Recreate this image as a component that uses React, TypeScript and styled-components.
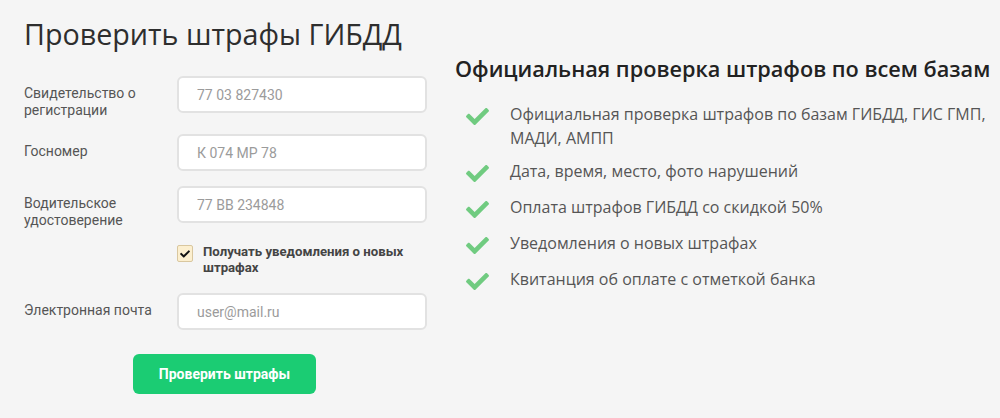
import React from "react";
import styled, { createGlobalStyle } from "styled-components";
import { FaCheck } from "react-icons/fa";

const GlobalStyle = createGlobalStyle`
  html, body {
    margin: 0;
    padding: 0;
    background: #f5f5f5;
  }
  * {
    box-sizing: border-box;
  }
`;

const Page = styled.div`
  display: flex;
  align-items: flex-start;
  width: 1000px;
  height: 418px;
  padding: 16px 0 0 24px;
  background: #f5f5f5;
  overflow: hidden;
`;

const FormColumn = styled.div`
  width: 403px;
  display: flex;
  flex-direction: column;
`;

const Title = styled.h1`
  margin: 0 0 24px;
  font-family: "Open Sans", "Liberation Sans", sans-serif;
  font-weight: 400;
  font-size: 28.7px;
  line-height: 36px;
  color: #2e2e2e;
`;

const FormRow = styled.div<{ $gap?: number }>`
  display: flex;
  align-items: flex-start;
  margin-top: ${(p) => p.$gap ?? 0}px;
`;

const Label = styled.label`
  width: 153px;
  flex-shrink: 0;
  padding: 9px 16px 0 0;
  font-family: Roboto, "Liberation Sans", sans-serif;
  font-size: 14px;
  line-height: 17px;
  color: #555;
`;

const TextInput = styled.input`
  width: 250px;
  height: 37px;
  padding: 0 18px;
  border: 2px solid #e2e2e2;
  border-radius: 6px;
  background: #fff;
  font-family: Roboto, "Liberation Sans", sans-serif;
  font-size: 14px;
  color: #333;
  outline: none;

  &::placeholder {
    color: #9b9b9b;
  }
`;

const CheckRow = styled.label`
  display: flex;
  align-items: flex-start;
  gap: 10px;
  width: 250px;
  cursor: pointer;
`;

const CheckBox = styled.span`
  display: flex;
  align-items: center;
  justify-content: center;
  width: 16px;
  height: 17px;
  margin-top: 1px;
  flex-shrink: 0;
  background: #fcefcf;
  border: 1px solid #d9c79f;
  border-radius: 2px;
  color: #111;
`;

const CheckText = styled.span`
  font-family: Roboto, "Liberation Sans", sans-serif;
  font-weight: 700;
  font-size: 13.2px;
  line-height: 16px;
  color: #444;
`;

const SubmitButton = styled.button`
  width: 183px;
  height: 40px;
  margin: 24px 0 0 109px;
  border: none;
  border-radius: 6px;
  background: #1bcc73;
  color: #fff;
  font-family: Roboto, "Liberation Sans", sans-serif;
  font-weight: 700;
  font-size: 14px;
  cursor: pointer;
`;

const InfoColumn = styled.div`
  margin: 38px 0 0 28px;
  font-family: "Open Sans", "Liberation Sans", sans-serif;
`;

const InfoTitle = styled.h2`
  margin: 0;
  font-weight: 600;
  font-size: 21.7px;
  line-height: 30px;
  color: #222;
  white-space: nowrap;
`;

const FeatureList = styled.ul`
  list-style: none;
  margin: 18px 0 0;
  padding: 0 0 0 11px;
`;

const FeatureItem = styled.li`
  display: flex;
  align-items: flex-start;
  gap: 21px;
  min-height: 27px;
  margin-bottom: 9px;
  font-size: 16px;
  line-height: 24px;
  color: #555;
`;

const CheckIcon = styled(FaCheck)`
  flex-shrink: 0;
  width: 23px;
  height: 23px;
  margin-top: 3px;
  color: #70cb80;
`;

const FeatureText = styled.span`
  max-width: 490px;
`;

const fields = [
  { label: "Свидетельство о регистрации", placeholder: "77 03 827430", gap: 0 },
  { label: "Госномер", placeholder: "К 074 МР 78", gap: 15 },
  { label: "Водительское удостоверение", placeholder: "77 ВВ 234848", gap: 15 },
];

const features = [
  "Официальная проверка штрафов по базам ГИБДД, ГИС ГМП, МАДИ, АМПП",
  "Дата, время, место, фото нарушений",
  "Оплата штрафов ГИБДД со скидкой 50%",
  "Уведомления о новых штрафах",
  "Квитанция об оплате с отметкой банка",
];

export default function App() {
  return (
    <>
      <GlobalStyle />
      <Page>
        <FormColumn>
          <Title>Проверить штрафы ГИБДД</Title>
          {fields.map((f) => (
            <FormRow key={f.label} $gap={f.gap}>
              <Label>{f.label}</Label>
              <TextInput placeholder={f.placeholder} />
            </FormRow>
          ))}
          <FormRow $gap={15}>
            <Label />
            <CheckRow>
              <CheckBox>
                <FaCheck size={10} />
              </CheckBox>
              <CheckText>Получать уведомления о новых штрафах</CheckText>
            </CheckRow>
          </FormRow>
          <FormRow $gap={17}>
            <Label>Электронная почта</Label>
            <TextInput placeholder="user@mail.ru" />
          </FormRow>
          <SubmitButton>Проверить штрафы</SubmitButton>
        </FormColumn>
        <InfoColumn>
          <InfoTitle>Официальная проверка штрафов по всем базам</InfoTitle>
          <FeatureList>
            {features.map((t) => (
              <FeatureItem key={t}>
                <CheckIcon />
                <FeatureText>{t}</FeatureText>
              </FeatureItem>
            ))}
          </FeatureList>
        </InfoColumn>
      </Page>
    </>
  );
}
